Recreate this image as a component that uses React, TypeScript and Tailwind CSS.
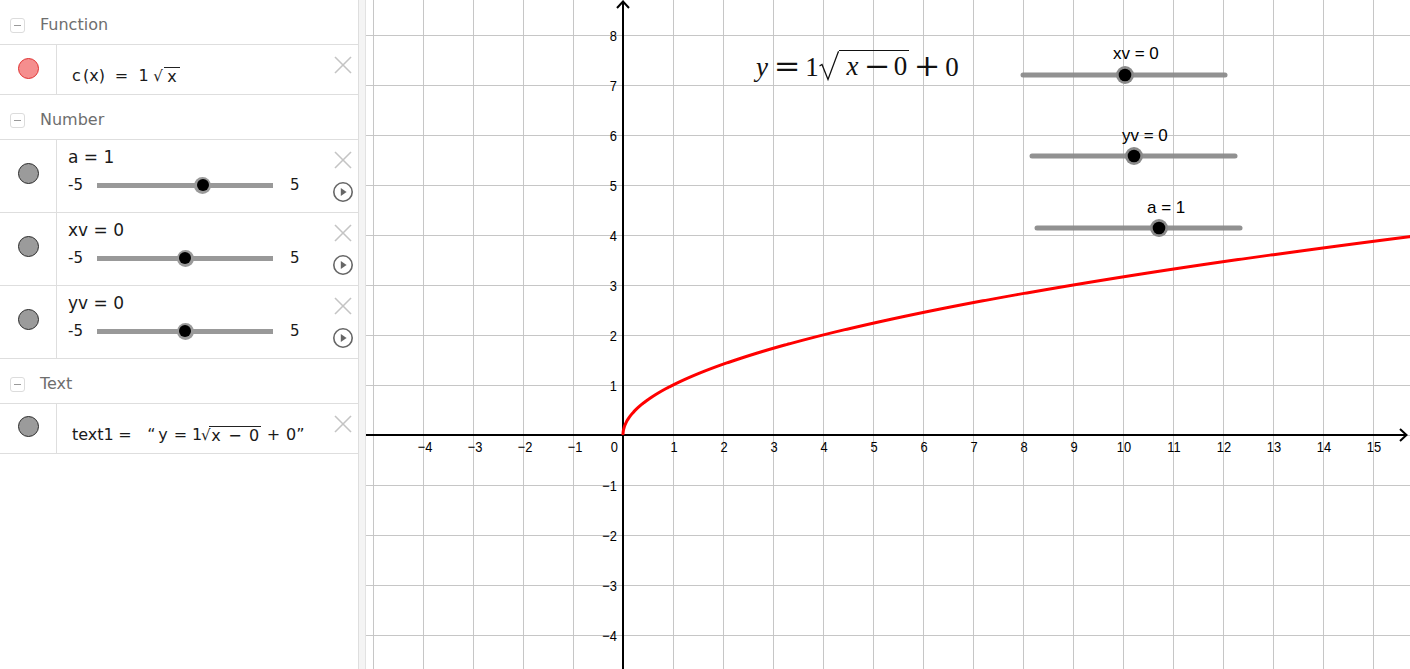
import React from "react";

const OX = 623;
const OY = 435;
const U = 50;

function MinusBox() {
  return (
    <div className="w-[15px] h-[15px] rounded-[3px] border border-[#dcdcdc] flex items-center justify-center">
      <div className="w-[7px] h-px bg-[#9a9a9a]" />
    </div>
  );
}

function Header({ label }: { label: string }) {
  return (
    <div className="h-[45px] border-b border-[#dedede] flex items-center pl-[10px] pt-[6px] gap-[15px] shrink-0">
      <MinusBox />
      <span className="text-[16px] text-[#6e6e6e]">{label}</span>
    </div>
  );
}

function Dot({ red }: { red?: boolean }) {
  return red ? (
    <div className="w-[21px] h-[21px] rounded-full bg-[#f58e8e] border border-[#e03030]" />
  ) : (
    <div className="w-[21px] h-[21px] rounded-full bg-[#9b9b9b] border border-[#2a2a2a]" />
  );
}

function XIcon() {
  return (
    <svg width="18" height="18" viewBox="0 0 18 18">
      <line x1="1" y1="1" x2="17" y2="17" stroke="#c4c4c4" strokeWidth="1.6" />
      <line x1="17" y1="1" x2="1" y2="17" stroke="#c4c4c4" strokeWidth="1.6" />
    </svg>
  );
}

function PlayIcon() {
  return (
    <svg width="22" height="22" viewBox="0 0 22 22">
      <circle cx="11" cy="11" r="9.2" fill="none" stroke="#666" strokeWidth="1.6" />
      <path d="M8.8 7 L14.6 11 L8.8 15 Z" fill="#666" />
    </svg>
  );
}

function SliderRow({ name, value }: { name: string; value: number }) {
  const pos = ((value + 5) / 10) * 176;
  return (
    <div className="h-[73px] border-b border-[#dedede] flex shrink-0">
      <div className="w-[57px] border-r border-[#dedede] flex items-center justify-center pb-[5px]">
        <Dot />
      </div>
      <div className="flex-1 flex flex-col pl-[11px] pt-[4px]">
        <div className="text-[17px] leading-[26px] text-[#1a1a1a]">{name}</div>
        <div className="flex items-center h-[26px] mt-[2px]">
          <span className="text-[15px] w-[29px] text-[#1a1a1a]">-5</span>
          <div className="relative w-[176px] h-[5px] bg-[#999]">
            <div
              className="absolute top-[-6px] w-[17px] h-[17px] rounded-full bg-[#9a9a9a] flex items-center justify-center"
              style={{ left: pos - 8.5 }}
            >
              <div className="w-[12px] h-[12px] rounded-full bg-black" />
            </div>
          </div>
          <span className="text-[15px] ml-[17px] text-[#1a1a1a]">5</span>
        </div>
      </div>
      <div className="w-[30px] flex flex-col items-center pt-[11px] gap-[12px]">
        <XIcon />
        <PlayIcon />
      </div>
    </div>
  );
}

function LeftPanel() {
  return (
    <div className="w-[359px] h-full border-r border-[#dedede] bg-white flex flex-col shrink-0 font-['DejaVu_Sans',sans-serif]">
      <Header label="Function" />
      <div className="h-[50px] border-b border-[#dedede] flex shrink-0">
        <div className="w-[57px] border-r border-[#dedede] flex items-center justify-center pb-[2px]">
          <Dot red />
        </div>
        <div className="flex-1 flex items-end pl-[15px] pb-[8px] text-[16px] leading-[20px] text-[#1a1a1a]">
          <span className="w-[8px]">c</span>
          <span className="w-[28px] pl-[3px]">(x)</span>
          <span className="w-[27px] text-center">=</span>
          <span className="w-[17px] text-center">1</span>
          <span className="w-[12px] text-[15px] text-center">√</span>
          <span className="w-[16px] text-center border-t border-[#222] leading-[18px]">x</span>
        </div>
        <div className="w-[30px] flex flex-col items-center pt-[11px]">
          <XIcon />
        </div>
      </div>
      <Header label="Number" />
      <SliderRow name="a = 1" value={1} />
      <SliderRow name="xv = 0" value={0} />
      <SliderRow name="yv = 0" value={0} />
      <Header label="Text" />
      <div className="h-[50px] border-b border-[#dedede] flex shrink-0">
        <div className="w-[57px] border-r border-[#dedede] flex items-center justify-center pb-[4px]">
          <Dot />
        </div>
        <div className="flex-1 flex items-end pl-[15px] pb-[8px] text-[16px] leading-[20px] text-[#1a1a1a]">
          <span className="w-[41px]">text1</span>
          <span className="w-[33px] text-center pr-[9px]">=</span>
          <span className="w-[11px] text-center">“</span>
          <span className="w-[12px] text-center">y</span>
          <span className="w-[23px] text-center">=</span>
          <span className="w-[9px]">1</span>
          <span className="w-[8px] text-[15px]">√</span>
          <span className="flex border-t border-[#222] leading-[18px]">
            <span className="w-[14px] text-center">x</span>
            <span className="w-[24px] text-center">−</span>
            <span className="w-[14px] text-center">0</span>
          </span>
          <span className="w-[25px] text-center">+</span>
          <span>0”</span>
        </div>
        <div className="w-[30px] flex flex-col items-center pt-[11px]">
          <XIcon />
        </div>
      </div>
    </div>
  );
}

function GraphSlider({
  x1,
  x2,
  y,
  knob,
  label,
  lx,
  ly,
}: {
  x1: number;
  x2: number;
  y: number;
  knob: number;
  label: string;
  lx: number;
  ly: number;
}) {
  return (
    <g>
      <line x1={x1} y1={y} x2={x2} y2={y} stroke="#8c8c8c" strokeWidth="5" strokeLinecap="round" opacity="0.95" />
      <circle cx={knob} cy={y} r="9" fill="#8a8a8a" />
      <circle cx={knob} cy={y} r="6.3" fill="#000" />
      <text x={lx} y={ly} fontSize="17" fontFamily="'Liberation Sans', Arial, sans-serif" fill="#000">
        {label}
      </text>
    </g>
  );
}

function Graph() {
  const vLines: number[] = [];
  for (let k = -5; k <= 15; k++) vLines.push(OX + k * U);
  const hLines: number[] = [];
  for (let k = -4; k <= 8; k++) hLines.push(OY - k * U);

  const pts: string[] = [];
  for (let i = 0; i <= 400; i++) {
    const t = i / 400;
    const xv = 15.8 * t * t;
    const px = OX + xv * U;
    const py = OY - Math.sqrt(xv) * U;
    pts.push(`${px.toFixed(2)},${py.toFixed(2)}`);
  }

  const xLabels: number[] = [];
  for (let k = -4; k <= 15; k++) if (k !== 0) xLabels.push(k);
  const yLabels: number[] = [];
  for (let k = -4; k <= 8; k++) if (k !== 0) yLabels.push(k);

  const fmt = (n: number) => (n < 0 ? `−${-n}` : `${n}`);

  return (
    <div className="relative flex-1 h-full overflow-hidden bg-white">
      <svg className="absolute inset-0" width="1044" height="669" viewBox="366 0 1044 669">
        <g shapeRendering="crispEdges">
          {vLines.map((x) => (
            <line key={"v" + x} x1={x + 0.5} y1={0} x2={x + 0.5} y2={669} stroke="#c6c6c6" strokeWidth="1" />
          ))}
          {hLines.map((y) => (
            <line key={"h" + y} x1={366} y1={y + 0.5} x2={1410} y2={y + 0.5} stroke="#c6c6c6" strokeWidth="1" />
          ))}
        </g>
        <line x1={366} y1={OY} x2={1406} y2={OY} stroke="#000" strokeWidth="2" />
        <polyline points={`1400,429 1406.5,435 1400,441`} fill="none" stroke="#000" strokeWidth="2" />
        <line x1={OX} y1={669} x2={OX} y2={2} stroke="#000" strokeWidth="2" />
        <polyline points={`617,8 623,1.5 629,8`} fill="none" stroke="#000" strokeWidth="2" />

        <g fontSize="15" fontFamily="'Liberation Sans', Arial, sans-serif" fill="#000">
          {xLabels.map((k) => (
            <text
              key={"xl" + k}
              transform={`translate(${OX + k * U + (k < 0 ? 2 : 1)} 452) scale(0.86 1)`}
              textAnchor="middle"
            >
              {fmt(k)}
            </text>
          ))}
          {yLabels.map((k) => (
            <text key={"yl" + k} transform={`translate(617 ${OY - k * U + 5.5}) scale(0.86 1)`} textAnchor="end">
              {fmt(k)}
            </text>
          ))}
          <text transform="translate(618 452) scale(0.86 1)" textAnchor="end">
            0
          </text>
        </g>

        <polyline points={pts.join(" ")} fill="none" stroke="#ff0000" strokeWidth="3" strokeLinejoin="round" />

        <GraphSlider x1={1023} x2={1225} y={75} knob={1125} label="xv = 0" lx={1113} ly={59} />
        <GraphSlider x1={1032} x2={1235} y={156} knob={1134} label="yv = 0" lx={1122} ly={141} />
        <GraphSlider x1={1037} x2={1240} y={228} knob={1159} label="a = 1" lx={1147} ly={213} />
      </svg>

      <div className="absolute left-[388px] top-[50px] flex items-end text-[27px] leading-[30px] text-[#111] font-['Liberation_Serif','DejaVu_Serif',serif]">
        <span className="w-[16px] text-center italic">y</span>
        <span className="w-[35px] text-center">
          <span className="inline-block scale-x-110 text-[29px] font-['DejaVu_Serif',serif]">=</span>
        </span>
        <span className="w-[14px] text-center">1</span>
        <svg width="20" height="31" viewBox="0 0 20 31" className="shrink-0">
          <path d="M0.5 15 L3 13.5 L9 28.5 L19.3 0.8 L20 0.8" fill="none" stroke="#111" strokeWidth="1.3" />
        </svg>
        <span className="flex border-t-[1.5px] border-[#111]">
          <span className="w-[23px] text-center italic pl-[4px]">x</span>
          <span className="w-[30px] text-center">
            <span className="inline-block scale-x-110 text-[29px] font-['DejaVu_Serif',serif]">−</span>
          </span>
          <span className="w-[17px] text-center">0</span>
        </span>
        <span className="w-[36px] text-center">
          <span className="inline-block scale-x-110 text-[29px] font-['DejaVu_Serif',serif]">+</span>
        </span>
        <span className="w-[14px] text-center">0</span>
      </div>
    </div>
  );
}

export default function App() {
  return (
    <div className="w-[1410px] h-[669px] flex overflow-hidden bg-white">
      <LeftPanel />
      <div className="w-[7px] h-full bg-[#f4f4f4] border-r border-[#e2e2e2] shrink-0" />
      <Graph />
    </div>
  );
}
